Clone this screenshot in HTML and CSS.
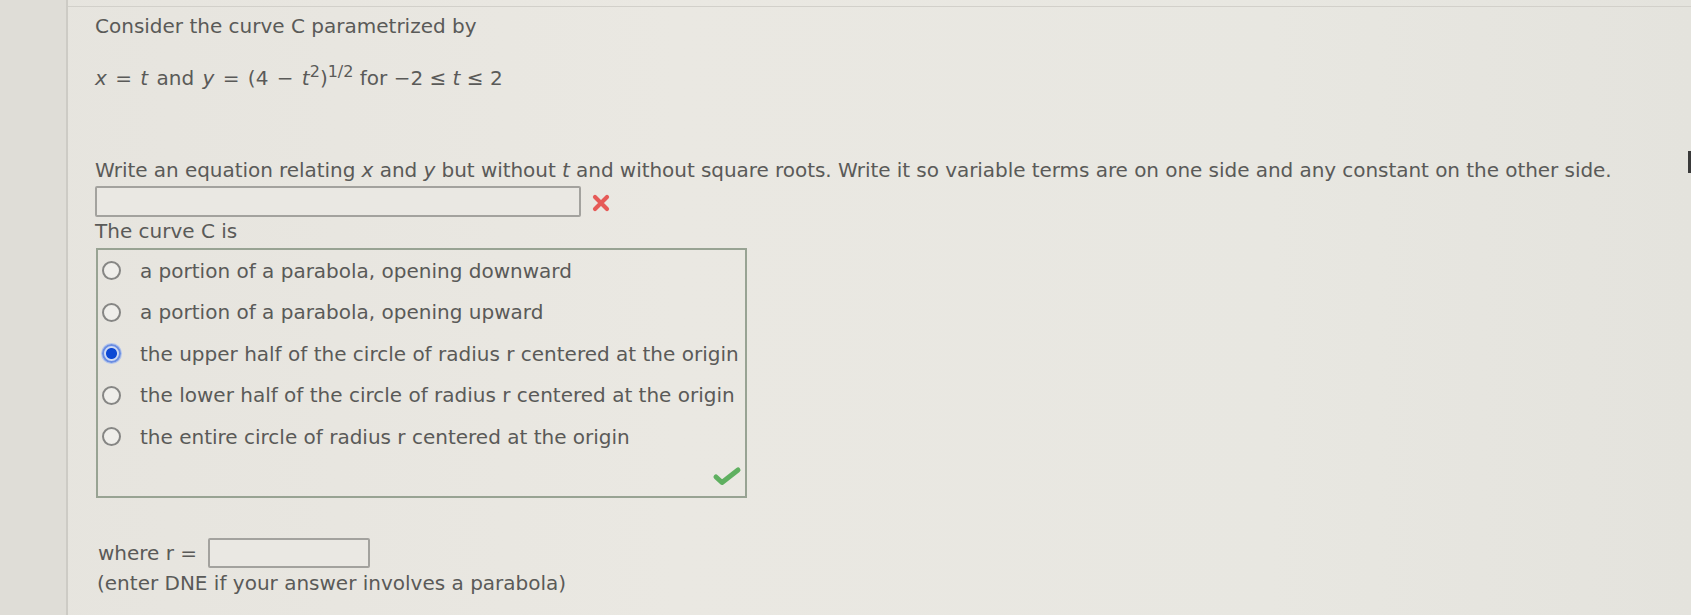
FILE: index.html
```html
<!DOCTYPE html>
<html>
<head>
<meta charset="utf-8">
<link rel="stylesheet" href="styles.css">
</head>
<body>
<div class="page">
  <aside class="side"></aside>
  <main class="main">
    <p class="line l1">Consider the curve C parametrized by</p>
    <p class="line l2"><span class="spaced"><i>x</i> = <i>t</i> and <i>y</i> = (4 − <i>t</i><sup>2</sup>)</span><sup>1/2</sup> for −2 ≤ <i>t</i> ≤ 2</p>
    <p class="line l3">Write an equation relating <i>x</i> and <i>y</i> but without <i>t</i> and without square roots. Write it so variable terms are on one side and any constant on the other side.</p>
    <div class="answer-row">
      <span class="field wide"></span>
      <svg class="mark-x" viewBox="0 0 20 20" width="20" height="20"><path d="M4 4 L16 16 M16 4 L4 16" stroke="#e65a57" stroke-width="4.2" stroke-linecap="round"/></svg>
    </div>
    <p class="line l4">The curve C is</p>
    <div class="choices">
      <div class="opt"><span class="radio"></span><span>a portion of a parabola, opening downward</span></div>
      <div class="opt"><span class="radio"></span><span>a portion of a parabola, opening upward</span></div>
      <div class="opt"><span class="radio on"></span><span>the upper half of the circle of radius r centered at the origin</span></div>
      <div class="opt"><span class="radio"></span><span>the lower half of the circle of radius r centered at the origin</span></div>
      <div class="opt"><span class="radio"></span><span>the entire circle of radius r centered at the origin</span></div>
      <svg class="mark-check" viewBox="0 0 32 20" width="32" height="20"><path d="M5 11 L11 16.5 L27 4" fill="none" stroke="#5fb060" stroke-width="5" stroke-linecap="round" stroke-linejoin="round"/></svg>
    </div>
    <div class="r-row"><span>where r =</span><span class="field short"></span></div>
    <p class="line l5">(enter DNE if your answer involves a parabola)</p>
  </main>
  <div class="edge-mark"></div>
</div>
</body>
</html>
```
FILE: styles.css
```css
html, body {
  margin: 0;
  padding: 0;
  height: 100%;
}
body {
  background: #e7e5df;
  font-family: "DejaVu Sans", Verdana, sans-serif;
  color: #5a5a58;
  overflow: hidden;
}
.page {
  display: flex;
  height: 615px;
  position: relative;
  background: linear-gradient(90deg, #e6e4de 0%, #eae8e2 40%, #e8e7e1 75%, #e4e3dd 100%);
}
.side {
  width: 66px;
  flex: none;
  background: #dfddd7;
  border-right: 2px solid #cdcbc5;
}
.main {
  flex: 1;
  margin-top: 6px;
  border-top: 1px solid #d2d0ca;
  padding-left: 27px;
  font-size: 20px;
}
.line {
  margin: 0;
  line-height: 24px;
  white-space: nowrap;
}
i {
  font-style: italic;
}
sup {
  font-size: 16px;
  line-height: 0;
  vertical-align: 8px;
}
.spaced {
  word-spacing: 2px;
}
.l1 { margin-top: 7px; }
.l2 { margin-top: 28px; }
.l3 { margin-top: 68px; letter-spacing: -0.055px; }
.answer-row {
  display: flex;
  align-items: center;
  margin-top: 4px;
  height: 30px;
}
.field {
  display: block;
  box-sizing: border-box;
  border: 2px solid #a3a29e;
  border-radius: 2px;
  background: #eae8e3;
}
.field.wide {
  width: 486px;
  height: 31px;
}
.mark-x {
  margin-left: 10px;
  margin-top: 4px;
}
.l4 { margin-top: 3px; }
.choices {
  position: relative;
  box-sizing: border-box;
  width: 651px;
  height: 250px;
  margin-top: 5px;
  margin-left: 1px;
  border: 2px solid #98a393;
  padding-top: 0;
  padding-left: 3px;
}
.opt {
  display: flex;
  align-items: center;
  height: 41.5px;
  white-space: nowrap;
}
.radio {
  box-sizing: border-box;
  width: 19px;
  height: 19px;
  border-radius: 50%;
  border: 2px solid #868684;
  background: #efeeea;
  margin-right: 19px;
  margin-left: 1px;
  flex: none;
}
.radio.on {
  border: 2px solid #6a8de2;
  background: radial-gradient(circle, #0c48d4 0 5px, #cfdaf3 6px);
  box-shadow: 0 0 0 1px #b0c4ef;
}
.mark-check {
  position: absolute;
  right: 2px;
  bottom: 10px;
}
.r-row {
  display: flex;
  align-items: center;
  gap: 11px;
  margin-top: 40px;
  padding-left: 3px;
  height: 30px;
}
.field.short {
  width: 162px;
  height: 30px;
}
.l5 { margin-top: 3px; padding-left: 2px; }
.edge-mark {
  position: absolute;
  right: 0;
  top: 151px;
  width: 3px;
  height: 22px;
  background: #3a3a3a;
}
```
